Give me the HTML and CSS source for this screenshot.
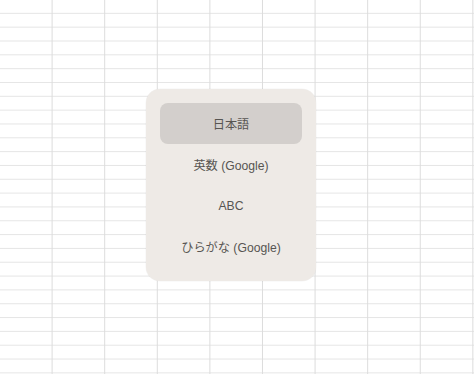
FILE: index.html
```html
<!DOCTYPE html>
<html lang="ja">
<head>
<meta charset="utf-8">
<link rel="stylesheet" href="styles.css">
</head>
<body>
<div class="sheet">
  <div class="menu">
    <div class="item selected">日本語</div>
    <div class="item">英数 (Google)</div>
    <div class="item">ABC</div>
    <div class="item">ひらがな (Google)</div>
  </div>
</div>
</body>
</html>
```
FILE: styles.css
```css
html, body {
  margin: 0;
  padding: 0;
  width: 474px;
  height: 374px;
  overflow: hidden;
  background: #ffffff;
}
.sheet {
  width: 474px;
  height: 374px;
  box-sizing: border-box;
  padding: 89px 0 0 146px;
  background-color: #ffffff;
  background-image:
    linear-gradient(to right, transparent calc(100% - 1px), #dcdcdc calc(100% - 1px)),
    linear-gradient(to bottom, transparent calc(100% - 1px), #e5e5e5 calc(100% - 1px));
  background-size: 52.6px 100%, 100% 13.83px;
  font-family: "Liberation Sans", "Noto Sans CJK JP", sans-serif;
}
.menu {
  width: 170px;
  box-sizing: border-box;
  padding: 14px;
  background: #eeeae6;
  border-radius: 14px;
  display: flex;
  flex-direction: column;
  box-shadow: 0 0 0 0.5px rgba(0,0,0,0.04);
}
.item {
  height: 41px;
  padding-top: 1px;
  box-sizing: border-box;
  display: flex;
  align-items: center;
  justify-content: center;
  font-size: 12.2px;
  color: #575552;
  border-radius: 8px;
}
.item.selected {
  background: #d3cfcc;
}
```
